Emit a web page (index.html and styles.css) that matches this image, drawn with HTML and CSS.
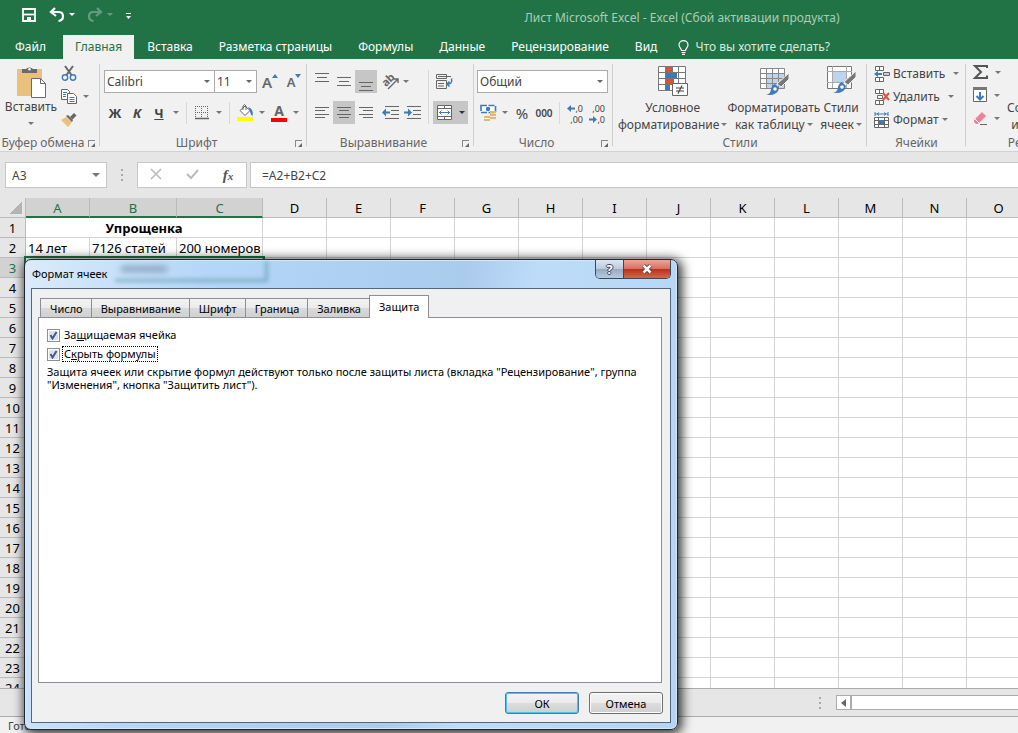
FILE: index.html
```html
<!DOCTYPE html>
<html lang="ru">
<head>
    <meta charset="UTF-8">
    <title>Лист Microsoft Excel - Excel</title>
    <link rel="stylesheet" href="styles.css">
</head>
<body>
    <div class="app">
        <header class="titlebar">
            <div class="quick">
                <button aria-label="Сохранить">
                    <svg width="16" height="16" viewBox="0 0 16 16" fill="none" stroke="#fff" stroke-width="1.800"><path d="M2 2h12v12H2z"/><path d="M3 7.500h10"/><path d="M6 10h4v4H6z" fill="#fff" stroke="none"/></svg>
                </button>
                <button aria-label="Отменить">
                    <svg width="16" height="16" viewBox="0 0 16 16" fill="none" stroke="#fff" stroke-width="2.200"><path d="M6 1L2 5l5 4M2.500 5h7c6 0 6 8 0 9"/></svg>
                    <span class="caret"></span>
                </button>
                <button class="faded" aria-label="Вернуть">
                    <svg width="16" height="16" viewBox="0 0 16 16" fill="none" stroke="#fff" stroke-width="2.200"><path d="M10 1l4 4-5 4M13.500 5h-7c-6 0-6 8 0 9"/></svg>
                    <span class="caret"></span>
                </button>
                <button aria-label="Настройка панели">
                    <svg width="8" height="10" viewBox="0 0 8 10" fill="#fff"><path d="M1 3h5v1H1zM1 6h5L3.500 9z"/></svg>
                </button>
            </div>
            <div class="doc-title">Лист Microsoft Excel - Excel (Сбой активации продукта)</div>
        </header>

        <nav class="tabs">
            <a href="#" class="file">Файл</a>
            <a href="#" class="active">Главная</a>
            <a href="#">Вставка</a>
            <a href="#">Разметка страницы</a>
            <a href="#">Формулы</a>
            <a href="#">Данные</a>
            <a href="#">Рецензирование</a>
            <a href="#">Вид</a>
            <a href="#" class="tell-me">
                <svg width="11" height="15" viewBox="0 0 11 15" fill="none" stroke="#fff" stroke-width="1.200"><path d="M3.500 10.500C3.500 8.500 1 7.500 1 5a4.500 4.300 0 0 1 9 0c0 2.500-2.500 3.500-2.500 5.500zM3.500 12.500h4M4 14.300h3"/></svg>
                Что вы хотите сделать?
            </a>
        </nav>

        <div class="ribbon">
            <section class="group clipboard">
                <div class="group-body">
                    <button class="paste">
                        <svg width="30" height="32" viewBox="0 0 30 32"><path d="M1 3h25v27H1z" fill="#e9c07c"/><path d="M6 7V3h4a4 3 0 0 1 7 0h4v4z" fill="#6a6a6a"/><circle cx="13.500" cy="3.200" r="1.300" fill="#f1f1f1"/><path d="M15.500 12.500h9l5 5v14h-14z" fill="#fff" stroke="#6a6a6a"/><path d="M24.500 12.500v5h5" fill="none" stroke="#6a6a6a"/></svg>
                        <span>Вставить</span>
                        <span class="caret"></span>
                    </button>
                    <div class="clip-tools">
                        <button aria-label="Вырезать">
                            <svg width="16" height="16" viewBox="0 0 16 16" fill="none"><path d="M4 1l6.500 9M12 1L5.500 10" stroke="#666" stroke-width="2"/><circle cx="4" cy="12.500" r="2.700" stroke="#3e79b8" stroke-width="1.400"/><circle cx="12" cy="12.500" r="2.700" stroke="#3e79b8" stroke-width="1.400"/></svg>
                        </button>
                        <button aria-label="Копировать">
                            <svg width="16" height="15" viewBox="0 0 16 15" fill="#fff" stroke="#666"><path d="M.5.5h6l2 2v8h-8z"/><path d="M6.500 4.500h6l3 3v7h-9z"/><path d="M2 3.500h4M2 5.500h3M2 7.500h3M8.500 8.500h5M8.500 10.500h5M8.500 12.500h5" stroke="#3e79b8"/></svg>
                            <span class="caret"></span>
                        </button>
                        <button aria-label="Формат по образцу">
                            <svg width="16" height="15" viewBox="0 0 16 15"><path d="M0 8l5-3 6 5-4 5z" fill="#e9c07c"/><path d="M5 4l2-1 5 5-1 2z" fill="#666"/><path d="M9 5l4-4 2.500 2.500-4 4z" fill="#666"/></svg>
                        </button>
                    </div>
                </div>
                <footer>Буфер обмена <i class="launcher"></i></footer>
            </section>

            <section class="group font">
                <div class="group-body rows">
                    <div class="row">
                        <select class="font-name" aria-label="Шрифт"><option>Calibri</option></select>
                        <select class="font-size" aria-label="Размер"><option>11</option></select>
                        <button class="ib grow" aria-label="Увеличить размер">
                            <span>A</span><svg width="6" height="4" viewBox="0 0 6 4"><path d="M0 4l3-4 3 4z" fill="#3e79b8"/></svg>
                        </button>
                        <button class="ib shrink" aria-label="Уменьшить размер">
                            <span>A</span><svg width="6" height="4" viewBox="0 0 6 4"><path d="M0 0l3 4 3-4z" fill="#3e79b8"/></svg>
                        </button>
                    </div>
                    <div class="row">
                        <button class="ib"><b>Ж</b></button>
                        <button class="ib"><b><i>К</i></b></button>
                        <button class="ib"><b><u>Ч</u></b></button>
                        <button class="drop" aria-label="Подчеркивание"><span class="caret"></span></button>
                        <span class="sep"></span>
                        <button class="ib" aria-label="Границы">
                            <svg width="14" height="14" viewBox="0 0 14 14" fill="none" stroke="#666"><path d="M.5 0v12M6.500 0v12M12.500 0v12M0 .5h13M0 6.500h13" stroke-dasharray="1 1"/><path d="M0 12.500h14" stroke-width="1.500"/></svg>
                        </button>
                        <button class="drop" aria-label="Виды границ"><span class="caret"></span></button>
                        <span class="sep"></span>
                        <button class="ib" aria-label="Цвет заливки">
                            <svg width="17" height="17" viewBox="0 0 17 17"><path d="M3 6.500l5-4.500 5 4.500-5 5z" fill="#fff" stroke="#666"/><path d="M6 6V2q1.500-3 3 0v4" fill="none" stroke="#666"/><path d="M11 3q6 2 4.500 9-2-1-2.500-5z" fill="#3e79b8"/><path d="M0 13h16v4H0z" fill="#ff0"/></svg>
                        </button>
                        <button class="drop" aria-label="Цвета заливки"><span class="caret"></span></button>
                        <button class="ib font-color" aria-label="Цвет текста"><b>A</b></button>
                        <button class="drop" aria-label="Цвета текста"><span class="caret"></span></button>
                    </div>
                </div>
                <footer>Шрифт <i class="launcher"></i></footer>
            </section>

            <section class="group align">
                <div class="group-body">
                    <div class="rows">
                        <div class="row">
                            <button class="ib" aria-label="По верхнему краю"><svg width="14" height="18" viewBox="0 0 14 18" stroke="#666"><path d="M0 .5h14M2 4.500h10M0 8.500h14"/></svg></button>
                            <button class="ib" aria-label="По середине"><svg width="14" height="18" viewBox="0 0 14 18" stroke="#666"><path d="M0 4.500h14M2 8.500h10M0 12.500h14"/></svg></button>
                            <button class="ib on" aria-label="По нижнему краю"><svg width="14" height="18" viewBox="0 0 14 18" stroke="#666"><path d="M0 9.500h14M2 13.500h10M0 17.500h14"/></svg></button>
                            <button class="ib wide" aria-label="Ориентация">
                                <svg width="18" height="18" viewBox="0 0 18 18" fill="none" stroke="#666"><text x="0" y="11" font-size="11" font-weight="bold" fill="#666" stroke="none" transform="rotate(-45 6 8)">ab</text><path d="M6 16L16 6M16 10V6h-4" stroke-width="1.400"/></svg>
                                <span class="caret"></span>
                            </button>
                        </div>
                        <div class="row">
                            <button class="ib" aria-label="По левому краю"><svg width="14" height="13" viewBox="0 0 14 13" stroke="#666"><path d="M0 1.500h14M0 4.500h10M0 8.500h14M0 11.500h10"/></svg></button>
                            <button class="ib on" aria-label="По центру"><svg width="14" height="13" viewBox="0 0 14 13" stroke="#666"><path d="M0 1.500h14M2 4.500h10M0 8.500h14M2 11.500h10"/></svg></button>
                            <button class="ib" aria-label="По правому краю"><svg width="14" height="13" viewBox="0 0 14 13" stroke="#666"><path d="M0 1.500h14M4 4.500h10M0 8.500h14M4 11.500h10"/></svg></button>
                            <button class="ib indent" aria-label="Уменьшить отступ"><svg width="17" height="13" viewBox="0 0 17 13"><path d="M3 .5h14M9 4.500h8M9 8.500h8M3 12.500h14" stroke="#666"/><path d="M0 6.500L4 2.500v3h4v2H4v3z" fill="#3e79b8"/></svg></button>
                            <button class="ib" aria-label="Увеличить отступ"><svg width="17" height="13" viewBox="0 0 17 13"><path d="M3 .5h14M9 4.500h8M9 8.500h8M3 12.500h14" stroke="#666"/><path d="M8 6.500L4 2.500v3H0v2h4v3z" fill="#3e79b8"/></svg></button>
                        </div>
                    </div>
                    <span class="sep"></span>
                    <div class="rows">
                        <button class="ib" aria-label="Перенести текст"><svg width="17" height="16" viewBox="0 0 17 16" fill="none" stroke="#666"><path d="M.5.5h10v4H.5zM.5 6.500h10v8H.5zM2 2.500h13"/><path d="M2 9.500h6M2 12h6"/><path d="M15.500 4.500c1 4-1 5.500-4 5.500M13.500 7.500L11 10l2.500 2.500" stroke="#3e79b8" stroke-width="1.500"/></svg></button>
                        <button class="ib on merge" aria-label="Объединить">
                            <svg width="15" height="15" viewBox="0 0 15 15" fill="#fff" stroke="#666"><path d="M.5.5h14v14H.5zM0 3.500h15M0 11.500h15M7.500 0v3.500M7.500 11.500V15"/><path d="M2 7.500h11M4.500 5.500l-2 2 2 2M10.500 5.500l2 2-2 2" fill="none" stroke="#3e79b8"/></svg>
                            <span class="caret"></span>
                        </button>
                    </div>
                </div>
                <footer>Выравнивание <i class="launcher"></i></footer>
            </section>

            <section class="group number">
                <div class="group-body rows">
                    <div class="row">
                        <select class="format" aria-label="Числовой формат"><option>Общий</option></select>
                    </div>
                    <div class="row">
                        <button class="ib" aria-label="Финансовый формат"><svg width="17" height="17" viewBox="0 0 17 17"><path d="M1 1.500h14.500v7H1z" fill="#fff" stroke="#3e79b8" stroke-width="1.600" stroke-dasharray="6 1.500"/><circle cx="8" cy="5" r="2.200" fill="#3e79b8"/><path d="M10 7h6v2h-6zM10 10h6v2h-6zM4 12h6v2H4zM10 13h6v2h-6zM4 15h6v2H4z" fill="#e9b76a"/></svg></button>
                        <button class="drop" aria-label="Валюты"><span class="caret"></span></button>
                        <button class="ib percent">%</button>
                        <button class="ib zeros">000</button>
                        <span class="sep"></span>
                        <button class="ib digits" aria-label="Увеличить разрядность"><span><svg width="8" height="7" viewBox="0 0 8 7"><path d="M0 3.500L4 0v2.500h4v2H4V7z" fill="#3e79b8"/></svg>,0</span><span>,00</span></button>
                        <button class="ib digits" aria-label="Уменьшить разрядность"><span>,00</span><span><svg width="8" height="7" viewBox="0 0 8 7"><path d="M8 3.500L4 0v2.500H0v2h4V7z" fill="#3e79b8"/></svg>,0</span></button>
                    </div>
                </div>
                <footer>Число <i class="launcher"></i></footer>
            </section>

            <section class="group styles">
                <div class="group-body">
                    <button class="big">
                        <svg width="32" height="32" viewBox="0 0 32 32"><path d="M1.500 2.500h27v25h-27z" fill="#fff"/><path d="M9 3h6v6H9zM9 15h8v5H9z" fill="#d65532"/><path d="M9 9h11v5H9zM9 21h4v5H9z" fill="#3e79b8"/><path d="M1.500 2.500h27v24h-27zM8.500 2v25M15.500 2v6M21.500 2v18M1 8.500h27M1 14.500h27M1 20.500h14" fill="none" stroke="#777"/><path d="M15.500 19.500h15v12h-15z" fill="#fff" stroke="#666"/><path d="M19 24h8M19 27h8M25 21.500l-4 8" stroke="#444" stroke-width="1.200"/></svg>
                        <span>Условное<br>форматирование<i class="caret"></i></span>
                    </button>
                    <button class="big">
                        <svg width="30" height="32" viewBox="0 0 30 32"><path d="M1.500 4.500h24v20h-24z" fill="#fff"/><path d="M8 10h17v14H8z" fill="#bdd4ec"/><path d="M1.500 4.500h24v20h-24zM7.500 4v21M13.500 4v21M19.500 4v21M1 9.500h25M1 14.500h25M1 19.500h25" fill="none" stroke="#888"/><path d="M30 9v6l-8 8-4-3z" fill="#777" stroke="#f1f1f1"/><path d="M16 20l4 4q-1 8-13 7 5-1 5-6 1-4 4-5z" fill="#3e79b8"/><circle cx="16" cy="25" r="1.800" fill="#fff"/></svg>
                        <span>Форматировать<br>как таблицу<i class="caret"></i></span>
                    </button>
                    <button class="big">
                        <svg width="30" height="32" viewBox="0 0 30 32"><path d="M1.500 2.500h24v22h-24z" fill="#fff" stroke="#777"/><path d="M7 8h13v10H7z" fill="#bdd4ec"/><path d="M6.500 2v22M20.500 2v22M1 7.500h25M1 18.500h25" fill="none" stroke="#aaa"/><path d="M30 7v6l-8 8-4-3z" fill="#777" stroke="#f1f1f1"/><path d="M16 18l4 4q-1 8-13 7 5-1 5-6 1-4 4-5z" fill="#3e79b8"/><circle cx="16" cy="23" r="1.800" fill="#fff"/></svg>
                        <span>Стили<br>ячеек<i class="caret"></i></span>
                    </button>
                </div>
                <footer>Стили</footer>
            </section>

            <section class="group cells">
                <div class="group-body">
                    <button>
                        <svg width="16" height="16" viewBox="0 0 16 16" fill="#fff" stroke="#666"><path d="M1.500.5h8v4h-8zM5.500 0v4M1.500 11.500h8v4h-8zM5.500 11v5"/><path d="M9.500 6.500h6v3h-6z" fill="#ccd"/><path d="M0 8l4-3v2h4v2H4v2z" fill="#3e79b8" stroke="none"/></svg>
                        Вставить <span class="caret far"></span>
                    </button>
                    <button>
                        <svg width="16" height="16" viewBox="0 0 16 16" fill="#fff" stroke="#666"><path d="M1.500.5h8v4h-8zM5.500 0v4M1.500 11.500h8v4h-8zM5.500 11v5M3.500 6.500h5v3h-5z"/><path d="M9 4l6 7M15 4l-6 7" stroke="#e0533a" stroke-width="2"/></svg>
                        Удалить <span class="caret far"></span>
                    </button>
                    <button>
                        <svg width="16" height="16" viewBox="0 0 16 16" fill="#fff" stroke="#666"><path d="M.5 5.500h14v10H.5zM4.500 5v11M10.500 5v11M0 8.500h15M0 12.500h15"/><path d="M5 8h5v4H5z" fill="#3e79b8" stroke="none"/><path d="M1 2h13M1 0v4M14 0v4M5 .5L3 2l2 1.500M10 .5L12 2l-2 1.500" fill="none" stroke="#3e79b8"/></svg>
                        Формат<span class="caret"></span>
                    </button>
                </div>
                <footer>Ячейки</footer>
            </section>

            <section class="group editing">
                <div class="group-body">
                    <div class="edit-tools">
                        <button aria-label="Автосумма"><svg width="16" height="16" viewBox="0 0 16 16" fill="none" stroke="#555" stroke-width="2"><path d="M14 4V2H2l6 6-6 6h12v-2.500"/></svg><span class="caret"></span></button>
                        <button aria-label="Заполнить"><svg width="15" height="16" viewBox="0 0 15 16"><path d="M.5.5h13v14H.5z" fill="#fff" stroke="#666"/><path d="M0 0h14v3H0z" fill="#777"/><path d="M7 5v7M3.500 9L7 12.500 10.500 9" fill="none" stroke="#3e79b8" stroke-width="2"/></svg><span class="caret"></span></button>
                        <button aria-label="Очистить"><svg width="15" height="15" viewBox="0 0 15 15"><path d="M1 9l8-8 4 4-8 8H3l-2-2z" fill="#ee8296"/><path d="M2 8l4.500 4.500" stroke="#fff"/><path d="M7 13.500h7" stroke="#666"/></svg><span class="caret"></span></button>
                    </div>
                    <button class="big">
                        <svg width="30" height="32" viewBox="0 0 30 32"></svg>
                        <span>Сортировка<br>и фильтр<i class="caret"></i></span>
                    </button>
                </div>
                <footer>Редактирование</footer>
            </section>
        </div>

        <div class="formula-bar">
            <div class="name-box">
                <input type="text" value="A3" aria-label="Имя">
                <span class="caret"></span>
            </div>
            <span class="grip"></span>
            <div class="fx">
                <button aria-label="Отмена ввода"><svg width="12" height="12" viewBox="0 0 12 12" stroke="#bbb" stroke-width="1.600"><path d="M1 1l10 10M11 1L1 11"/></svg></button>
                <button aria-label="Ввод"><svg width="13" height="12" viewBox="0 0 13 12" fill="none" stroke="#bbb" stroke-width="2"><path d="M1 6l4 4 7-8"/></svg></button>
                <button class="fn"><i>f</i><small>x</small></button>
            </div>
            <input class="formula" type="text" value="=A2+B2+C2" aria-label="Формула">
        </div>

        <div class="sheet">
            <table>
                <thead id="cols"></thead>
                <tbody id="cells"></tbody>
            </table>
        </div>

        <div class="sheet-tabs">
            <span class="grip"></span>
            <div class="hscroll">
                <button aria-label="Влево"><svg width="5" height="8" viewBox="0 0 5 8"><path d="M5 0v8L0 4z" fill="#666"/></svg></button>
                <div class="thumb"></div>
            </div>
        </div>
        <div class="status">Готово</div>
    </div>

    <div class="dialog" role="dialog" aria-labelledby="dialog-title">
        <div class="dialog-head">
            <h1 id="dialog-title">Формат ячеек</h1>
            <div class="win-buttons">
                <button class="help" aria-label="Справка">?</button>
                <button class="close" aria-label="Закрыть"><svg width="12" height="10" viewBox="0 0 12 10"><path d="M2.500 1.500l7 7M9.500 1.500l-7 7" stroke="#58312c" stroke-width="4"/><path d="M2.500 1.500l7 7M9.500 1.500l-7 7" stroke="#fff" stroke-width="2.500"/></svg></button>
            </div>
        </div>
        <div class="dialog-body">
            <div class="dialog-tabs">
                <button>Число</button>
                <button>Выравнивание</button>
                <button>Шрифт</button>
                <button>Граница</button>
                <button>Заливка</button>
                <button class="active">Защита</button>
            </div>
            <div class="panel">
                <div class="check">
                    <input type="checkbox" id="locked" checked>
                    <label for="locked">За<u>щ</u>ищаемая ячейка</label>
                </div>
                <div class="check">
                    <input type="checkbox" id="hidden" checked>
                    <label for="hidden" class="focused">С<u>к</u>рыть формулы</label>
                </div>
                <p>Защита ячеек или скрытие формул действуют только после защиты листа (вкладка "Рецензирование", группа "Изменения", кнопка "Защитить лист").</p>
            </div>
            <div class="actions">
                <button class="default">ОК</button>
                <button>Отмена</button>
            </div>
        </div>
    </div>

    <script>
        (function () {

            var letters = "ABCDEFGHIJKLMNO".split("");
            var rowsCount = 24;
            var selectedRow = 3;
            var selectedCols = 3;

            // строка 1 - объединенная ячейка A1:C1
            var values = {
                2: ["14 лет", "7126 статей", "200 номеров"]
            };

            function addCell(row, tag, text, className) {
                var cell = document.createElement(tag);
                cell.textContent = text || "";
                if (className) {
                    cell.className = className;
                }
                row.appendChild(cell);
                return cell;
            }

            var head = document.getElementById("cols").insertRow();
            addCell(head, "th", "", "corner");
            letters.forEach(function (letter, i) {
                addCell(head, "th", letter, "col col-" + letter + (i < selectedCols ? " selected" : ""));
            });

            var body = document.getElementById("cells");
            for (var y = 1; y <= rowsCount; y++) {
                var row = body.insertRow();
                addCell(row, "th", y, y == selectedRow ? "selected" : "");
                var x = 0;
                if (y == 1 || y == selectedRow) {
                    addCell(row, "td", y == 1 ? "Упрощенка" : "", y == 1 ? "merged" : "current").colSpan = 3;
                    x = 3;
                }
                for (; x < letters.length; x++) {
                    addCell(row, "td", values[y] ? values[y][x] : "");
                }
            }

        }());
    </script>
</body>
</html>
```

FILE: styles.css
```css
* {
    box-sizing: border-box;
}
body {
    margin: 0;
    font: 12px "Noto Sans", "Open Sans", sans-serif;
    color: #444;
    overflow: hidden;
}
button {
    margin: 0; padding: 0; border: 0;
    background: none;
    font: inherit;
    color: inherit;
}
svg {
    flex: none;
    overflow: visible;
}
.app {
    display: flex;
    flex-direction: column;
    height: 100vh;
}
.caret {
    display: inline-block;
    flex: none;
    border: 3px solid transparent;
    border-top-color: #777;
    border-bottom: 0;
}

/* title */
.titlebar {
    display: flex;
    align-items: center;
    height: 35px;
    flex: none;
    background: #217346;
    color: #fff;
}
    .quick {
        display: flex;
        align-items: center;
        gap: 12px;
        width: 346px;
        padding: 0 0 6px 21px;
    }
        .quick button {
            display: flex;
            align-items: center;
            gap: 4px;
        }
        .quick .caret {
            border-top-color: #fff;
        }
        .quick .faded {
            opacity: .3;
        }
    .doc-title {
        flex: 1;
        text-align: center;
        color: #a9cdb6;
    }

.tabs {
    display: flex;
    height: 24px;
    flex: none;
    background: #217346;
}
    .tabs a {
        padding: 0 13px;
        line-height: 24px;
        color: #fff;
        text-decoration: none;
        white-space: nowrap;
    }
    .tabs .file {
        padding: 0 17px 0 15px;
    }
    .tabs .active {
        padding: 0 12px;
        background: #f1f1f1;
        color: #217346;
    }
    .tabs .tell-me {
        display: flex;
        align-items: center;
        gap: 6px;
        padding: 0 8px;
        color: #d8e9df;
    }

/* ribbon */
.ribbon {
    display: flex;
    height: 93px;
    flex: none;
    overflow: hidden;
    background: #f1f1f1;
    border-bottom: 1px solid #d2d2d2;
}
    .group {
        display: flex;
        flex-direction: column;
        flex: none;
        position: relative;
    }
    .group::after {
        content: "";
        position: absolute;
        right: 0; top: 5px; bottom: 5px;
        border-right: 1px solid #d0d0d0;
    }
    .clipboard { width: 100px; }
    .font { width: 207px; }
    .align { width: 167px; }
    .number { width: 139px; }
    .styles { width: 254px; }
    .cells { width: 99px; }
    .editing { width: 180px; }
        .group-body {
            display: flex;
            flex: 1;
        }
        .group footer {
            display: flex;
            justify-content: center;
            height: 18px;
            line-height: 20px;
            padding: 0 14px 0 0;
            color: #666;
            white-space: nowrap;
            position: relative;
        }
        .styles footer,
        .cells footer,
        .editing footer {
            padding: 0;
        }
        .launcher {
            position: absolute;
            right: 5px; top: 7px;
            width: 7px; height: 7px;
            border: 1px solid #888;
            border-width: 1px 0 0 1px;
        }
        .launcher::after {
            content: "";
            position: absolute;
            right: 0; bottom: 0;
            border: 2px solid #666;
            border-top-color: transparent;
            border-left-color: transparent;
        }

    .rows {
        display: flex;
        flex-direction: column;
        gap: 8px;
    }
    .row {
        display: flex;
        align-items: center;
        height: 23px;
    }
    .ib,
    .drop {
        display: flex;
        align-items: center;
        justify-content: center;
        width: 22px; height: 23px;
    }
    .ib {
        font-size: 13px;
        line-height: 18px;
    }
    .drop {
        width: 12px;
    }
    .ib.on {
        background: #c6c6c6;
    }
    .sep {
        width: 1px; height: 22px;
        margin: 0 4px;
        background: #d8d8d8;
    }
    select {
        height: 23px;
        padding: 0 0 0 2px;
        border: 1px solid #ababab;
        border-radius: 0;
        appearance: none;
        background: #fff url("data:image/svg+xml,%3Csvg xmlns='http://www.w3.org/2000/svg' width='6' height='3'%3E%3Cpath d='M0 0h6L3 3z' fill='%23666'/%3E%3C/svg%3E") no-repeat right 4px center;
        font: inherit;
        color: #444;
    }

    .paste {
        display: flex;
        flex-direction: column;
        align-items: center;
        width: 62px;
        padding-top: 7px;
        line-height: 18px;
    }
        .paste .caret {
            margin-top: 6px;
        }
    .clip-tools {
        display: flex;
        flex-direction: column;
        gap: 7px;
        padding-top: 6px;
        margin-left: -1px;
    }
        .clip-tools button,
        .edit-tools button {
            display: flex;
            align-items: center;
            gap: 6px;
            height: 16px;
        }

    .font .group-body {
        padding: 11px 0 0 4px;
    }
        .font-name {
            width: 111px;
        }
        .font-size {
            width: 43px;
            margin-left: -1px;
        }
        .grow,
        .shrink {
            align-items: flex-start;
            margin-left: 2px;
            font-weight: 600;
            color: #666;
        }
        .grow {
            font-size: 15px;
        }
            .grow span,
            .shrink span {
                line-height: 24px;
            }
            .grow svg,
            .shrink svg {
                margin-top: 4px;
            }
        .font-color b {
            width: 16px; height: 18px;
            border-bottom: 4px solid #f00;
            line-height: 13px;
            font-size: 14px;
            color: #666;
        }

    .align .group-body {
        padding: 11px 0 0 4px;
    }
        .align .group-body > .sep {
            height: 54px;
        }
        .align .rows:first-child {
            width: 113px;
        }
        .ib.wide {
            width: 36px;
            gap: 3px;
        }
        .indent {
            margin-left: 2px;
        }
        .merge {
            width: 35px;
            gap: 7px;
        }
        .merge .caret {
            border-top-color: #333;
        }

    .number .group-body {
        padding: 11px 0 0 3px;
    }
        .format {
            width: 131px;
        }
        .percent {
            font-size: 15px;
        }
        .zeros {
            font-size: 10px;
            font-weight: 600;
        }
        .digits {
            flex-direction: column;
            align-items: flex-end;
            font-size: 9px;
            line-height: 13px;
            padding-right: 3px;
        }
        .digits span {
            height: 11px;
            white-space: nowrap;
        }

    .styles .group-body {
        padding: 5px 7px 0 5px;
        justify-content: space-between;
    }
    .big {
        display: flex;
        flex-direction: column;
        align-items: center;
        gap: 3px;
        line-height: 17px;
        white-space: nowrap;
    }
        .big .caret {
            margin: 0 0 3px 2px;
        }
    .cells .group-body {
        flex-direction: column;
        padding: 3px 0 0 7px;
    }
        .cells button {
            display: flex;
            align-items: center;
            gap: 3px;
            height: 23px;
        }
        .far {
            margin-left: 5px;
        }
    .editing .group-body {
        padding: 5px 0 0 7px;
        gap: 5px;
    }
        .edit-tools {
            display: flex;
            flex-direction: column;
            gap: 7px;
            width: 29px;
        }

/* formula bar */
.formula-bar {
    display: flex;
    height: 46px;
    flex: none;
    padding: 10px 0 10px 5px;
    background: #e6e6e6;
}
    .name-box {
        display: flex;
        align-items: center;
        width: 102px;
        padding-right: 6px;
        border: 1px solid #c6c6c6;
        background: #fff;
    }
        .name-box input {
            flex: 1;
            min-width: 0;
            border: 0;
            padding: 0 6px;
            font: inherit;
            color: inherit;
        }
        .name-box .caret {
            border-width: 4px 4px 0;
        }
    .grip {
        width: 2px; height: 12px;
        margin: 7px 14px;
        background: repeating-linear-gradient(#aaa 0 2px, transparent 2px 5px);
    }
    .fx {
        display: flex;
        width: 110px;
        border: 1px solid #c6c6c6;
        background: #fff;
    }
        .fx button {
            flex: 1;
        }
        .fn {
            font: bold 15px "Liberation Serif", serif;
            color: #555;
        }
            .fn small {
                font-size: 11px;
                font-style: italic;
            }
    .formula {
        flex: 1;
        min-width: 0;
        margin-left: 3px;
        padding: 0 11px;
        border: 1px solid #c6c6c6;
        border-right: 0;
        font: inherit;
        color: inherit;
    }

/* sheet */
.sheet {
    flex: 1;
    min-height: 0;
    overflow: hidden;
    background: #fff;
}
    .sheet table {
        width: max-content;
        table-layout: fixed;
        border-collapse: separate;
        border-spacing: 0;
        font-size: 13px;
        color: #000;
    }
    .sheet th,
    .sheet td {
        height: 20px;
        padding: 2px 0 0;
        border: 1px solid #d4d4d4;
        border-width: 0 1px 1px 0;
        line-height: 17px;
        white-space: nowrap;
    }
    .sheet td {
        padding-left: 2px;
    }
    .sheet th {
        width: 26px;
        background: #e6e6e6;
        border-color: #bbb;
        font-weight: normal;
    }
    .sheet .col {
        width: 64px;
    }
    .sheet .col-B {
        width: 87px;
    }
    .sheet .col-C {
        width: 86px;
    }
    .sheet .selected {
        background: #d2d2d2;
        color: #217346;
    }
    .sheet .col.selected {
        border-bottom: 2px solid #217346;
        line-height: 16px;
    }
    .sheet .corner {
        background: linear-gradient(135deg, transparent 50%, #b4b4b4 50%) no-repeat 10px 4px / 12px 12px #e6e6e6;
    }
    .sheet .merged {
        text-align: center;
        padding-left: 0;
        font-weight: bold;
    }
    .sheet .current {
        box-shadow: 0 0 0 2px #217346;
    }

.sheet-tabs {
    display: flex;
    justify-content: flex-end;
    height: 29px;
    flex: none;
    padding-top: 6px;
    border: 1px solid #ababab;
    border-width: 1px 0;
    background: #e6e6e6;
}
    .sheet-tabs .grip {
        margin: 2px 15px;
    }
    .hscroll {
        display: flex;
        width: 182px; height: 15px;
    }
        .hscroll button {
            display: flex;
            align-items: center;
            justify-content: center;
            width: 15px;
            border: 1px solid #ababab;
            background: #fff;
        }
        .thumb {
            flex: 1;
            border: 1px solid #ababab;
            border-right: 0;
            background: #fff;
        }
.status {
    height: 16px;
    flex: none;
    padding-left: 8px;
    background: #f1f1f1;
    font-size: 11px;
    line-height: 17px;
}

/* dialog */
.dialog {
    position: absolute;
    left: 24px; top: 259px; right: 340px; bottom: 3px;
    display: flex;
    flex-direction: column;
    padding: 0 6px 6px;
    border: 1px solid #20262e;
    border-radius: 7px;
    background: linear-gradient(100deg, #dcebfa 0, #b4d6f8 25%, #a9cbec 60%, #bcdcfa 70%, #b4d4f4 100%);
    box-shadow: inset 0 0 0 1px #d4e8fc, 2px 2px 11px 2px rgba(0, 0, 0, .8);
    color: #000;
    font-size: 11px;
}
    .dialog-head {
        display: flex;
        justify-content: space-between;
        height: 28px;
        flex: none;
        position: relative;
    }
    /* selected cell showing through the glass */
    .dialog-head::before,
    .dialog-head::after {
        content: "";
        position: absolute;
        filter: blur(3px);
    }
    .dialog-head::before {
        left: 90px; top: 6px;
        width: 46px; height: 6px;
        background: #5f7d98;
        opacity: .6;
    }
    .dialog-head::after {
        left: 84px; top: 1px;
        width: 150px; height: 18px;
        border: 3px solid #4f91a0;
        border-width: 0 3px 3px 0;
        opacity: .6;
        filter: blur(2px);
    }
        .dialog-head h1 {
            margin: 0;
            padding-left: 1px;
            font-size: 11px;
            font-weight: normal;
            line-height: 28px;
        }
        .win-buttons {
            display: flex;
            height: 19px;
            border: 1px solid #3d4857;
            border-top: 0;
            border-radius: 0 0 5px 5px;
            overflow: hidden;
        }
            .win-buttons button {
                display: flex;
                align-items: center;
                justify-content: center;
            }
            .win-buttons .help {
                width: 28px;
                border-right: 1px solid #3d4857;
                background: linear-gradient(#dbe7f3 0, #bccbdc 48%, #94a9c2 50%, #b4cce2 100%);
                color: #fff;
                font-size: 13px;
                font-weight: bold;
                text-shadow: 1px 0 #445, -1px 0 #445, 0 1px #445, 0 -1px #445;
            }
            .win-buttons .close {
                width: 46px;
                background: linear-gradient(#eba69a 0, #d8705f 48%, #b8301c 50%, #d6674c 100%);
            }
    .dialog-body {
        display: flex;
        flex-direction: column;
        flex: 1;
        padding: 6px 7px 8px 6px;
        border: 1px solid #566679;
        background: #f0f0f0;
    }
    .dialog-tabs {
        display: flex;
        align-items: flex-end;
        padding-left: 2px;
        position: relative;
        z-index: 1;
        margin-bottom: -1px;
    }
        .dialog-tabs button {
            height: 20px;
            padding: 0 8px 0 9px;
            border: 1px solid #8c8e94;
            border-right: 0;
            background: linear-gradient(#f3f3f3 0, #ebebeb 50%, #dadada 50%, #d0d0d0 100%);
        }
        .dialog-tabs .active {
            height: 23px;
            padding: 0 9px 2px;
            border-right: 1px solid #8c8e94;
            border-bottom: 0;
            background: #fff;
        }
    .panel {
        flex: 1;
        margin-right: 1px;
        padding: 9px 8px;
        border: 1px solid #8c8e94;
        background: #fff;
    }
        .check {
            display: flex;
            align-items: center;
            gap: 2px;
            height: 16px;
            margin-bottom: 3px;
        }
            .check input {
                width: 13px; height: 13px;
                margin: 0;
                appearance: none;
                border: 1px solid #8e8f8f;
                box-shadow: inset 0 0 0 1px #fff;
                background: #dde2ea url("data:image/svg+xml,%3Csvg xmlns='http://www.w3.org/2000/svg' width='11' height='11'%3E%3Cpath d='M2.500 5l2 3.500L8.500 2' fill='none' stroke='%23405a93' stroke-width='2'/%3E%3C/svg%3E") no-repeat center;
            }
            .check label {
                padding: 0 1px;
                line-height: 14px;
                border: 1px solid transparent;
            }
            .check .focused {
                border: 1px dotted #000;
            }
        .panel p {
            margin: 0;
            line-height: 13px;
        }
    .actions {
        display: flex;
        justify-content: flex-end;
        gap: 10px;
        padding-top: 9px;
    }
        .actions button {
            width: 74px; height: 22px;
            border: 1px solid #707070;
            border-radius: 3px;
            background: linear-gradient(#f3f3f3 0, #ebebeb 50%, #dddddd 50%, #cfcfcf 100%);
            box-shadow: inset 0 0 0 1px #fbfbfb;
        }
        .actions .default {
            border-color: #3c7fb1;
            box-shadow: inset 0 0 0 1px #48c4ea;
        }
```
